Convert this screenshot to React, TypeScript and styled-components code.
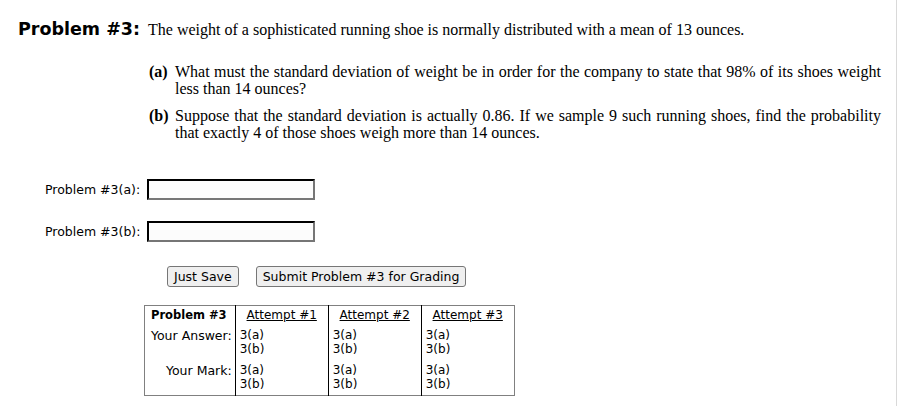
import React from 'react'
import styled, { createGlobalStyle } from 'styled-components'

const GlobalStyle = createGlobalStyle`
  html, body {
    margin: 0;
    padding: 0;
    background: #fff;
  }
`

const Page = styled.div`
  display: flex;
  width: 909px;
  height: 406px;
  overflow: hidden;
`

const Content = styled.div`
  width: 897px;
  border-right: 1px solid #d9d9d9;
  box-sizing: border-box;
  padding: 17px 15px 0 18px;
`

const Statement = styled.div`
  font-family: 'Liberation Serif', 'Times New Roman', serif;
  font-size: 16px;
  color: #000;
  line-height: 24px;
`

const Title = styled.span`
  font-family: 'DejaVu Sans', Verdana, sans-serif;
  font-weight: 700;
  font-size: 17.5px;
  margin-right: 8px;
`

const Parts = styled.ol`
  list-style: none;
  margin: 21px 0 0 131px;
  padding: 0;
  display: flex;
  flex-direction: column;
  gap: 10px;
`

const Part = styled.li`
  display: grid;
  grid-template-columns: 26px 1fr;
  font-family: 'Liberation Serif', 'Times New Roman', serif;
  font-size: 16px;
  line-height: 17px;
  text-align: justify;
`

const PartMark = styled.span`
  font-weight: 700;
`

const Answers = styled.div`
  margin: 38px 0 0 27px;
  display: flex;
  flex-direction: column;
  gap: 21px;
`

const AnswerRow = styled.label`
  display: flex;
  align-items: center;
  gap: 7px;
  font-family: 'DejaVu Sans', Verdana, sans-serif;
  font-size: 12.5px;
  color: #000;
`

const AnswerInput = styled.input`
  width: 168px;
  height: 21px;
  box-sizing: border-box;
  border: 2px inset #767676;
  border-top-color: #222;
  border-left-color: #222;
  background: #fcfcfc;
  margin: 0;
  padding: 0 2px;
`

const Buttons = styled.div`
  display: flex;
  gap: 17px;
  margin: 24px 0 0 149px;
`

const Button = styled.button`
  font-family: 'DejaVu Sans', Verdana, sans-serif;
  font-size: 12.5px;
  color: #000;
  background: #efefef;
  border: 1px solid #767676;
  border-radius: 3px;
  height: 21px;
  padding: 0 6px;
  margin: 0;
`

const Attempts = styled.table`
  margin: 18px 0 0 126px;
  border-collapse: collapse;
  border: 1px solid #808080;
  font-family: 'DejaVu Sans', Verdana, sans-serif;
  font-size: 12px;
  color: #000;
`

const HeadCell = styled.th<{ $first?: boolean }>`
  font-weight: ${p => (p.$first ? 700 : 400)};
  font-size: ${p => (p.$first ? '11.5px' : '12px')};
  text-align: ${p => (p.$first ? 'left' : 'center')};
  padding: 2px 6px 3px 6px;
  border-left: ${p => (p.$first ? 'none' : '1px solid #000')};
  text-decoration: ${p => (p.$first ? 'none' : 'underline')};
  width: ${p => (p.$first ? 'auto' : '80px')};
`

const RowLabel = styled.td`
  text-align: right;
  vertical-align: top;
  padding: 3px 3px 4px 6px;
  white-space: nowrap;
  font-size: 12.5px;
`

const Cell = styled.td`
  vertical-align: top;
  padding: 3px 6px 4px 4px;
  border-left: 1px solid #000;
  line-height: 14px;
`

const attempts = ['Attempt #1', 'Attempt #2', 'Attempt #3']

export default function App() {
  return (
    <>
      <GlobalStyle />
      <Page>
        <Content>
          <Statement>
            <Title>Problem #3:</Title>
            The weight of a sophisticated running shoe is normally distributed with a mean of 13 ounces.
          </Statement>
          <Parts>
            <Part>
              <PartMark>(a)</PartMark>
              <span>
                What must the standard deviation of weight be in order for the company to state that 98% of its
                shoes weight less than 14 ounces?
              </span>
            </Part>
            <Part>
              <PartMark>(b)</PartMark>
              <span>
                Suppose that the standard deviation is actually 0.86. If we sample 9 such running shoes, find the
                probability that exactly 4 of those shoes weigh more than 14 ounces.
              </span>
            </Part>
          </Parts>
          <Answers>
            <AnswerRow>
              Problem #3(a):
              <AnswerInput type="text" />
            </AnswerRow>
            <AnswerRow>
              Problem #3(b):
              <AnswerInput type="text" />
            </AnswerRow>
          </Answers>
          <Buttons>
            <Button>Just Save</Button>
            <Button>Submit Problem #3 for Grading</Button>
          </Buttons>
          <Attempts>
            <thead>
              <tr>
                <HeadCell $first>Problem #3</HeadCell>
                {attempts.map(a => (
                  <HeadCell key={a}>{a}</HeadCell>
                ))}
              </tr>
            </thead>
            <tbody>
              <tr>
                <RowLabel>Your Answer:</RowLabel>
                {attempts.map(a => (
                  <Cell key={a}>
                    3(a)
                    <br />
                    3(b)
                  </Cell>
                ))}
              </tr>
              <tr>
                <RowLabel>Your Mark:</RowLabel>
                {attempts.map(a => (
                  <Cell key={a}>
                    3(a)
                    <br />
                    3(b)
                  </Cell>
                ))}
              </tr>
            </tbody>
          </Attempts>
        </Content>
      </Page>
    </>
  )
}
